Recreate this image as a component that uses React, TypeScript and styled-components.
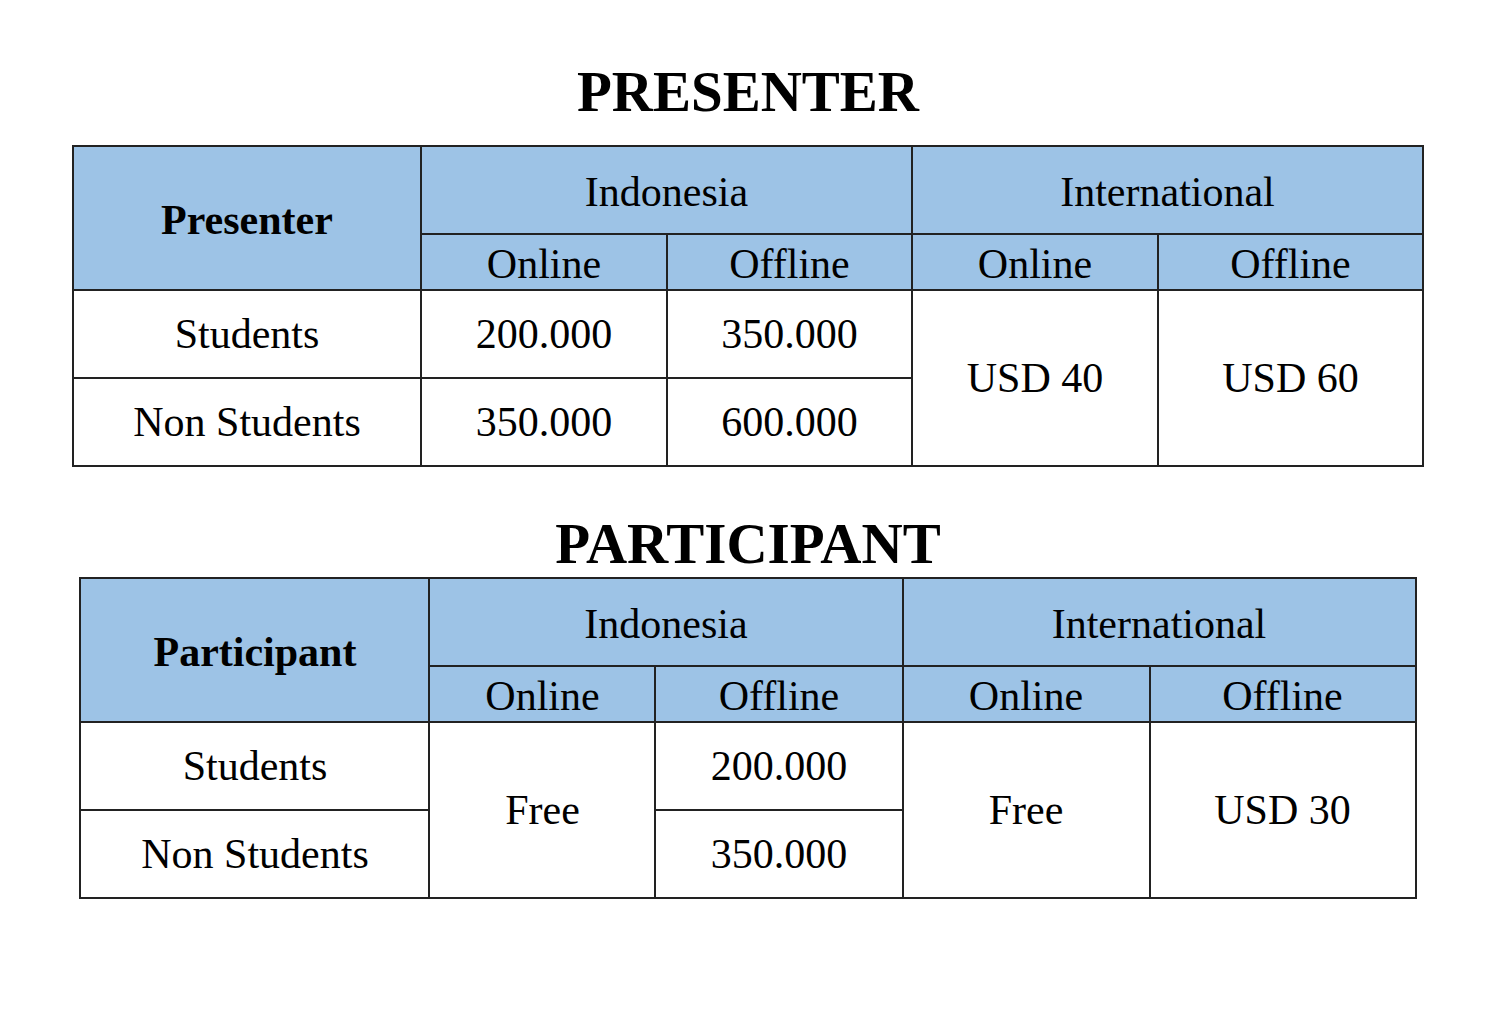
import React from 'react';
import styled, { createGlobalStyle } from 'styled-components';

const GlobalStyle = createGlobalStyle`
  html, body {
    margin: 0;
    padding: 0;
    background: #ffffff;
  }
  body {
    font-family: "Liberation Serif", "Times New Roman", serif;
    color: #000000;
  }
`;

type Price = {
  label: string;
  cells: { text: string; rowSpan?: number }[];
};

const presenterRows: Price[] = [
  {
    label: 'Students',
    cells: [{ text: '200.000' }, { text: '350.000' }, { text: 'USD 40', rowSpan: 2 }, { text: 'USD 60', rowSpan: 2 }],
  },
  { label: 'Non Students', cells: [{ text: '350.000' }, { text: '600.000' }] },
];

const participantRows: Price[] = [
  {
    label: 'Students',
    cells: [{ text: 'Free', rowSpan: 2 }, { text: '200.000' }, { text: 'Free', rowSpan: 2 }, { text: 'USD 30', rowSpan: 2 }],
  },
  { label: 'Non Students', cells: [{ text: '350.000' }] },
];

const PriceTable: React.FC<{
  title: string;
  widths: number[];
  rows: Price[];
}> = ({ title, widths, rows }) => (
  <Table style={{ width: widths.reduce((a, b) => a + b, 0) }}>
    <colgroup>
      {widths.map((w, i) => (
        <col key={i} style={{ width: w }} />
      ))}
    </colgroup>
    <thead>
      <GroupRow>
        <HeadCell rowSpan={2} $bold>
          {title}
        </HeadCell>
        <HeadCell colSpan={2}>Indonesia</HeadCell>
        <HeadCell colSpan={2}>International</HeadCell>
      </GroupRow>
      <ModeRow>
        <HeadCell>Online</HeadCell>
        <HeadCell>Offline</HeadCell>
        <HeadCell>Online</HeadCell>
        <HeadCell>Offline</HeadCell>
      </ModeRow>
    </thead>
    <tbody>
      {rows.map((r) => (
        <BodyRow key={r.label}>
          <Cell>{r.label}</Cell>
          {r.cells.map((c, i) => (
            <Cell key={i} rowSpan={c.rowSpan}>
              {c.text}
            </Cell>
          ))}
        </BodyRow>
      ))}
    </tbody>
  </Table>
);

const App: React.FC = () => {
  return (
    <>
      <GlobalStyle />
      <Page>
        <Title $top={60} $bottom={21}>PRESENTER</Title>
        <PriceTable title="Presenter" widths={[348, 246, 245, 246, 265]} rows={presenterRows} />
        <Title $top={45} $bottom={1}>PARTICIPANT</Title>
        <PriceTable title="Participant" widths={[349, 226, 247, 247, 266]} rows={participantRows} />
      </Page>
    </>
  );
};

export default App;

const Page = styled.div`
  width: 1496px;
  min-height: 1010px;
  display: flex;
  flex-direction: column;
  align-items: center;
`;

const Title = styled.h1<{ $top: number; $bottom: number }>`
  margin: ${(p) => p.$top}px 0 ${(p) => p.$bottom}px;
  font-family: "Liberation Serif", "Times New Roman", serif;
  font-size: 57px;
  line-height: 64px;
  font-weight: 700;
  text-align: center;
`;

const Table = styled.table`
  border-collapse: collapse;
  table-layout: fixed;
  border: 2px solid #222222;
  font-family: "Liberation Serif", "Times New Roman", serif;
  font-size: 42px;
  color: #000000;
`;

const GroupRow = styled.tr`
  height: 88px;
`;

const ModeRow = styled.tr`
  height: 56px;
`;

const BodyRow = styled.tr`
  height: 88px;
`;

const HeadCell = styled.th<{ $bold?: boolean }>`
  background: #9dc3e6;
  border: 2px solid #222222;
  font-weight: ${(p) => (p.$bold ? 700 : 400)};
  text-align: center;
  vertical-align: middle;
  padding: 3px 0 0;
`;

const Cell = styled.td`
  background: #ffffff;
  border: 2px solid #222222;
  text-align: center;
  vertical-align: middle;
  padding: 0;
`;
